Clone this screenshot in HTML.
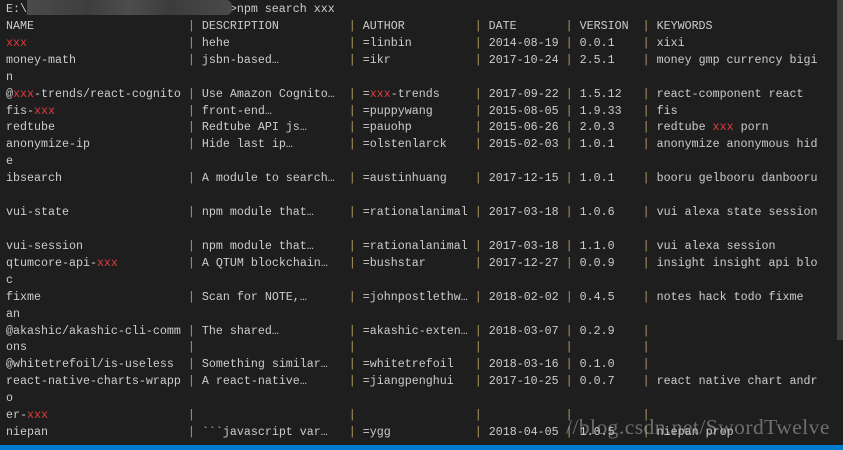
<!DOCTYPE html>
<html><head><meta charset="utf-8"><style>
html,body{margin:0;padding:0;}
body{width:843px;height:450px;background:#1e1e1e;overflow:hidden;position:relative;}
pre{position:absolute;left:6px;top:1px;margin:0;font-family:"Liberation Mono",monospace;font-size:11.67px;line-height:16.92px;color:#cccccc;white-space:pre;}
.p{color:#b39a63}
.r{color:#e03c3c}
.e{display:inline-block;width:7px;overflow:hidden;vertical-align:top;}
#blur{position:absolute;left:27px;top:0;width:205px;height:15px;background:linear-gradient(90deg,#4a4a4a,#3e3e3e 30%,#4d4d4d 50%,#3c3c3c 70%,#4a4a4a);border-radius:0 6px 6px 0;z-index:2;}
#sb{position:absolute;left:837px;top:0;width:6px;height:340px;background:#424242;}
#bar{position:absolute;left:0;top:445px;width:843px;height:5px;background:#007acc;}
#wm{position:absolute;left:566px;top:415px;font-family:"Liberation Serif",serif;font-size:21.5px;color:rgba(190,190,190,0.5);letter-spacing:0.45px;z-index:2;}
</style></head><body>
<div id="blur"></div>
<div id="sb"></div>
<div id="wm">//blog.csdn.net/SwordTwelve</div>
<div id="bar"></div>
<pre>E:\                             &gt;npm search xxx
NAME                      <span class="p">|</span> DESCRIPTION          <span class="p">|</span> AUTHOR          <span class="p">|</span> DATE       <span class="p">|</span> VERSION  <span class="p">|</span> KEYWORDS
<span class="r">xxx</span>                       <span class="p">|</span> hehe                 <span class="p">|</span> =linbin         <span class="p">|</span> 2014-08-19 <span class="p">|</span> 0.0.1    <span class="p">|</span> xixi
money-math                <span class="p">|</span> jsbn-based<span class="e">…</span>          <span class="p">|</span> =ikr            <span class="p">|</span> 2017-10-24 <span class="p">|</span> 2.5.1    <span class="p">|</span> money gmp currency bigi
n
@<span class="r">xxx</span>-trends/react-cognito <span class="p">|</span> Use Amazon Cognito<span class="e">…</span>  <span class="p">|</span> =<span class="r">xxx</span>-trends     <span class="p">|</span> 2017-09-22 <span class="p">|</span> 1.5.12   <span class="p">|</span> react-component react
fis-<span class="r">xxx</span>                   <span class="p">|</span> front-end<span class="e">…</span>           <span class="p">|</span> =puppywang      <span class="p">|</span> 2015-08-05 <span class="p">|</span> 1.9.33   <span class="p">|</span> fis
redtube                   <span class="p">|</span> Redtube API js<span class="e">…</span>      <span class="p">|</span> =pauohp         <span class="p">|</span> 2015-06-26 <span class="p">|</span> 2.0.3    <span class="p">|</span> redtube <span class="r">xxx</span> porn
anonymize-ip              <span class="p">|</span> Hide last ip<span class="e">…</span>        <span class="p">|</span> =olstenlarck    <span class="p">|</span> 2015-02-03 <span class="p">|</span> 1.0.1    <span class="p">|</span> anonymize anonymous hid
e
ibsearch                  <span class="p">|</span> A module to search<span class="e">…</span>  <span class="p">|</span> =austinhuang    <span class="p">|</span> 2017-12-15 <span class="p">|</span> 1.0.1    <span class="p">|</span> booru gelbooru danbooru

vui-state                 <span class="p">|</span> npm module that<span class="e">…</span>     <span class="p">|</span> =rationalanimal <span class="p">|</span> 2017-03-18 <span class="p">|</span> 1.0.6    <span class="p">|</span> vui alexa state session

vui-session               <span class="p">|</span> npm module that<span class="e">…</span>     <span class="p">|</span> =rationalanimal <span class="p">|</span> 2017-03-18 <span class="p">|</span> 1.1.0    <span class="p">|</span> vui alexa session
qtumcore-api-<span class="r">xxx</span>          <span class="p">|</span> A QTUM blockchain<span class="e">…</span>   <span class="p">|</span> =bushstar       <span class="p">|</span> 2017-12-27 <span class="p">|</span> 0.0.9    <span class="p">|</span> insight insight api blo
c
fixme                     <span class="p">|</span> Scan for NOTE,<span class="e">…</span>      <span class="p">|</span> =johnpostlethw<span class="e">…</span> <span class="p">|</span> 2018-02-02 <span class="p">|</span> 0.4.5    <span class="p">|</span> notes hack todo fixme
an
@akashic/akashic-cli-comm <span class="p">|</span> The shared<span class="e">…</span>          <span class="p">|</span> =akashic-exten<span class="e">…</span> <span class="p">|</span> 2018-03-07 <span class="p">|</span> 0.2.9    <span class="p">|</span>
ons                       <span class="p">|</span>                      <span class="p">|</span>                 <span class="p">|</span>            <span class="p">|</span>          <span class="p">|</span>
@whitetrefoil/is-useless  <span class="p">|</span> Something similar<span class="e">…</span>   <span class="p">|</span> =whitetrefoil   <span class="p">|</span> 2018-03-16 <span class="p">|</span> 0.1.0    <span class="p">|</span>
react-native-charts-wrapp <span class="p">|</span> A react-native<span class="e">…</span>      <span class="p">|</span> =jiangpenghui   <span class="p">|</span> 2017-10-25 <span class="p">|</span> 0.0.7    <span class="p">|</span> react native chart andr
o
er-<span class="r">xxx</span>                    <span class="p">|</span>                      <span class="p">|</span>                 <span class="p">|</span>            <span class="p">|</span>          <span class="p">|</span>
niepan                    <span class="p">|</span> &#96;&#96;&#96;javascript var<span class="e">…</span>   <span class="p">|</span> =ygg            <span class="p">|</span> 2018-04-05 <span class="p">|</span> 1.0.5    <span class="p">|</span> niepan prop</pre>
</body></html>
